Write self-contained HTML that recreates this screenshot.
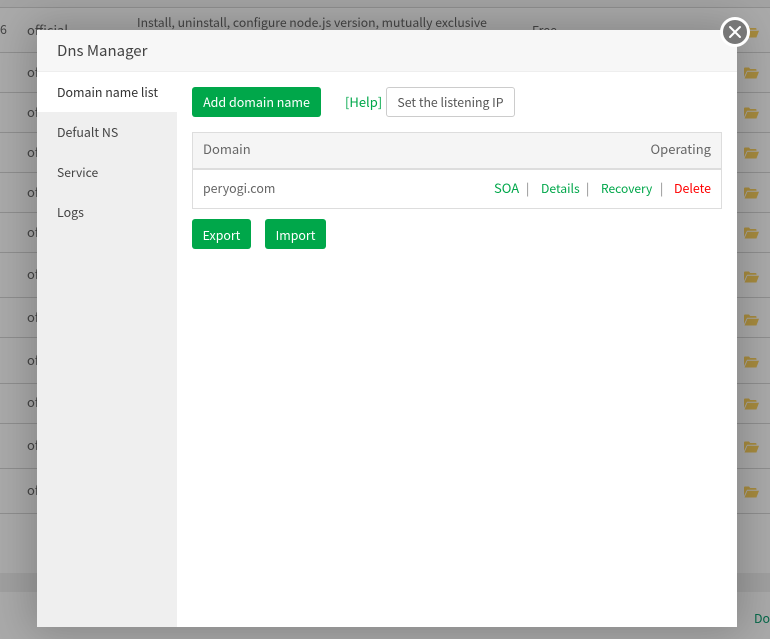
<!DOCTYPE html>
<html>
<head>
<meta charset="utf-8">
<style>
html,body{margin:0;padding:0;width:770px;height:639px;overflow:hidden;background:#aaa}
body{position:relative;font-family:"Noto Sans CJK SC","Liberation Sans",sans-serif;font-size:12.4px;color:#555}
.a{position:absolute;white-space:nowrap;line-height:18px}
.ln{position:absolute;left:0;width:770px;height:1px;background:#8f8f8f}
.of{position:absolute;left:27px;color:#444;line-height:18px;font-size:13px}
.fd{position:absolute;left:744px;width:15px;height:12px}
#modal{position:absolute;left:37px;top:30px;width:700px;height:597px;background:#fff;box-shadow:0 0 40px 6px rgba(0,0,0,.22)}
.btn{position:absolute;background:#00a74a;color:#fff;border-radius:3px;text-align:center;line-height:30px;height:30px;white-space:nowrap}
.g{color:#00a74a}
</style>
</head>
<body>
<div style="position:absolute;left:0;top:0;width:770px;height:7px;background:#a3a3a3"></div>
<div class="ln" style="top:7px"></div>
<div class="ln" style="top:52px"></div>
<div class="ln" style="top:92px"></div>
<div class="ln" style="top:132px"></div>
<div class="ln" style="top:172px"></div>
<div class="ln" style="top:212px"></div>
<div class="ln" style="top:252px"></div>
<div class="ln" style="top:297px"></div>
<div class="ln" style="top:337px"></div>
<div class="ln" style="top:383px"></div>
<div class="ln" style="top:423px"></div>
<div class="ln" style="top:468px"></div>
<div class="ln" style="top:513px"></div>
<div style="position:absolute;left:0;top:573px;width:770px;height:19px;background:#a0a0a0"></div>

<div class="a" style="left:0;top:20px;color:#444">6</div>
<div class="of" style="top:21px">official</div>
<div class="a" style="left:137px;top:13px;color:#444;font-size:12.2px">Install, uninstall, configure node.js version, mutually exclusive</div>
<div class="a" style="left:532px;top:21px;color:#444">Free</div>
<div class="of" style="top:63px">of</div>
<div class="of" style="top:103px">of</div>
<div class="of" style="top:143px">of</div>
<div class="of" style="top:183px">of</div>
<div class="of" style="top:223px">of</div>
<div class="of" style="top:265px">of</div>
<div class="of" style="top:308px">of</div>
<div class="of" style="top:351px">of</div>
<div class="of" style="top:393px">of</div>
<div class="of" style="top:436px">of</div>
<div class="of" style="top:481px">of</div>
<div class="a" style="left:754px;top:609px;color:#07694a">Do</div>

<svg width="0" height="0" style="position:absolute"><defs><symbol id="f" viewBox="0 0 15 12"><path d="M0 1.5Q0 .5 1 .5H5L6.2 2H11.5Q12.5 2 12.5 3V3.8H3L0 10Z" fill="#a88c3f"/><path d="M3.4 4.8H15L12.4 11.5H.5Z" fill="#a88c3f"/></symbol></defs></svg>
<svg class="fd" style="top:26px"><use href="#f"/></svg>
<svg class="fd" style="top:67px"><use href="#f"/></svg>
<svg class="fd" style="top:107px"><use href="#f"/></svg>
<svg class="fd" style="top:147px"><use href="#f"/></svg>
<svg class="fd" style="top:187px"><use href="#f"/></svg>
<svg class="fd" style="top:227px"><use href="#f"/></svg>
<svg class="fd" style="top:271px"><use href="#f"/></svg>
<svg class="fd" style="top:314px"><use href="#f"/></svg>
<svg class="fd" style="top:356px"><use href="#f"/></svg>
<svg class="fd" style="top:398px"><use href="#f"/></svg>
<svg class="fd" style="top:441px"><use href="#f"/></svg>
<svg class="fd" style="top:486px"><use href="#f"/></svg>

<div id="modal">
  <div style="position:absolute;left:0;top:0;width:700px;height:41px;background:#f7f7f7;border-bottom:1px solid #eee"></div>
  <div class="a" style="left:20px;top:11px;font-size:15px;color:#444;line-height:20px">Dns Manager</div>
  <div style="position:absolute;left:0;top:82px;width:140px;height:515px;background:#efefef"></div>
  <div class="a" style="left:20px;top:53px;color:#333">Domain name list</div>
  <div class="a" style="left:20px;top:93px;color:#444">Defualt NS</div>
  <div class="a" style="left:20px;top:134px;color:#444;font-size:12.1px">Service</div>
  <div class="a" style="left:20px;top:173px;color:#444">Logs</div>

  <div class="btn" style="left:155px;top:57px;width:129px;font-size:12.5px">Add domain name</div>
  <div class="a g" style="left:308px;top:63px;font-size:13px">[Help]</div>
  <div class="a" style="left:349px;top:57px;width:127px;height:28px;line-height:28px;border:1px solid #ccc;border-radius:3px;text-align:center;color:#555;font-size:12.3px">Set the listening IP</div>

  <div style="position:absolute;left:155px;top:102px;width:528px;height:75px;border:1px solid #ddd"></div>
  <div style="position:absolute;left:156px;top:103px;width:528px;height:35px;background:#f5f5f5;border-bottom:2px solid #ddd"></div>
  <div class="a" style="left:166px;top:110px;color:#666;font-size:13px">Domain</div>
  <div class="a" style="right:26px;top:110px;color:#666;font-size:13px">Operating</div>
  <div class="a" style="left:166px;top:149px;color:#666">peryogi.com</div>
  <div class="a g" style="left:457px;top:149px;font-size:13px">SOA</div>
  <div class="a" style="left:489px;top:149px;color:#888">|</div>
  <div class="a g" style="left:504px;top:149px;font-size:12.2px">Details</div>
  <div class="a" style="left:549px;top:149px;color:#888">|</div>
  <div class="a g" style="left:564px;top:150px;font-size:12px">Recovery</div>
  <div class="a" style="left:623px;top:149px;color:#888">|</div>
  <div class="a" style="right:26px;top:149px;color:#f00">Delete</div>

  <div class="btn" style="left:155px;top:189px;width:59px;line-height:32px">Export</div>
  <div class="btn" style="left:228px;top:189px;width:61px;line-height:32px">Import</div>
</div>

<div style="position:absolute;left:720px;top:17px;width:30px;height:30px;box-sizing:border-box;border:3px solid #fff;border-radius:50%;background:#777"></div>
<svg style="position:absolute;left:720px;top:17px" width="30" height="30"><path d="M10 10L20 20M20 10L10 20" stroke="#fff" stroke-width="2" stroke-linecap="round"/></svg>
</body>
</html>
